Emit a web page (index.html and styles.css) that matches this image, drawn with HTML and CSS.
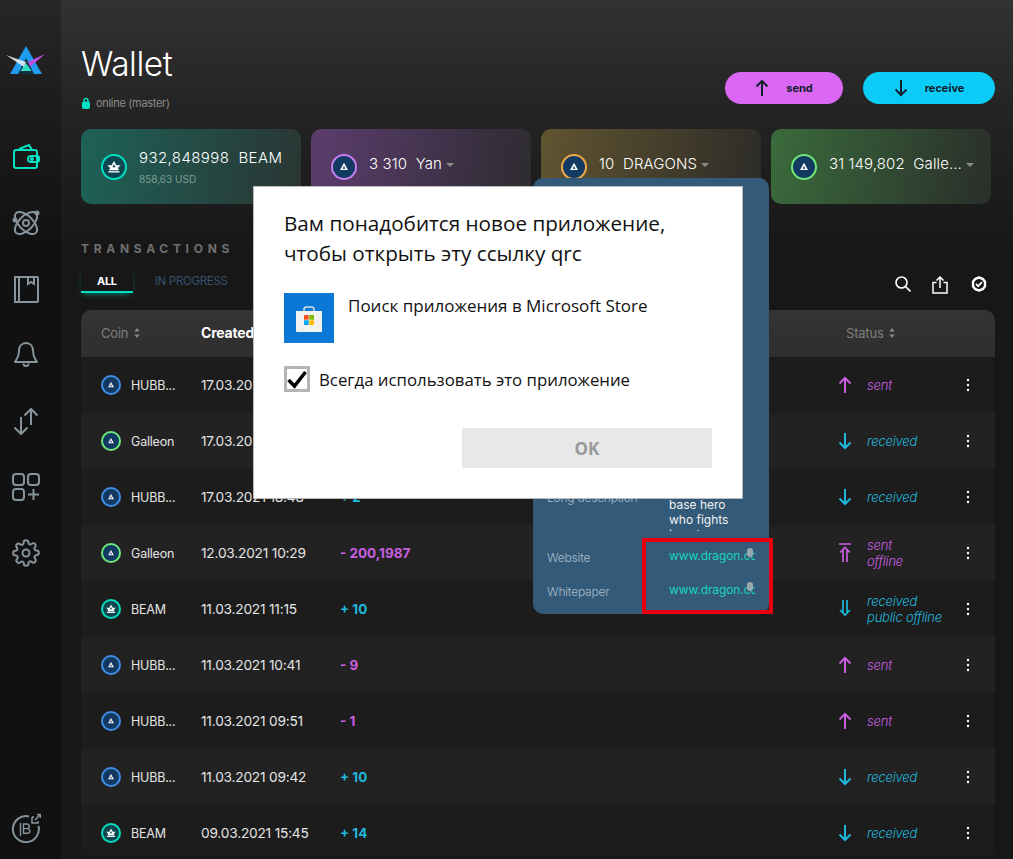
FILE: index.html
```html
<!DOCTYPE html>
<html lang="en">
<head>
    <meta charset="UTF-8">
    <meta name="viewport" content="width=device-width, initial-scale=1.0">
    <title>Wallet</title>
    <link rel="stylesheet" href="styles.css">
</head>
<body>
    <!-- Shared icons -->
    <svg class="sprite" xmlns="http://www.w3.org/2000/svg">
        <symbol id="asset" viewBox="0 0 20 20">
            <path d="M10 6.2l3.6 6.6H6.4z" fill="#fff"/>
            <path d="M10 9.2l1.3 2.4H8.7z" fill="#123a63"/>
        </symbol>
        <symbol id="beam" viewBox="0 0 20 20">
            <path d="M10 4.5l4.6 8.5H5.4z" fill="#fff"/>
            <path d="M4 8.5h12l-2.5 2.5h-7z" fill="#fff"/>
            <path d="M10 7.5l1.5 2.8H8.5z" fill="#0d4650"/>
            <path d="M5 13.8h10V15H5z" fill="#fff"/>
        </symbol>
        <symbol id="sort" viewBox="0 0 6 10">
            <path d="M3 0l2.6 3.6H.4zM3 10L.4 6.4h5.2z" fill="#8a8a8a"/>
        </symbol>
        <symbol id="up" viewBox="0 0 14 18">
            <path d="M7 17V2M1.5 7.5L7 2l5.5 5.5" fill="none" stroke="currentColor" stroke-width="2"/>
        </symbol>
        <symbol id="down" viewBox="0 0 14 18">
            <path d="M7 1v15M1.5 10.5L7 16l5.5-5.5" fill="none" stroke="currentColor" stroke-width="2"/>
        </symbol>
        <symbol id="up-offline" viewBox="0 0 14 20">
            <path d="M1 1h12M5 19V7M9 19V7M2 9.5l5-5 5 5" fill="none" stroke="currentColor" stroke-width="1.7"/>
        </symbol>
        <symbol id="down-offline" viewBox="0 0 14 20">
            <path d="M5 1v13M9 1v13M2 11l5 5 5-5" fill="none" stroke="currentColor" stroke-width="1.7"/>
        </symbol>
        <symbol id="dots" viewBox="0 0 4 14">
            <circle cx="2" cy="2" r="1.2" fill="#fff"/>
            <circle cx="2" cy="7" r="1.2" fill="#fff"/>
            <circle cx="2" cy="12" r="1.2" fill="#fff"/>
        </symbol>
    </svg>

    <div class="app">
        <!-- Left icon bar -->
        <nav class="sidebar">
            <svg class="logo" viewBox="0 0 44 34" width="44" height="34">
                <path d="M20 2l16 28H4z" fill="#1f9bf0"/>
                <path d="M20 14l8 16H12z" fill="#12303f"/>
                <path d="M20 19l5.5 8h-11z" fill="#2fe0c8"/>
                <path d="M0 11l20 7-2 5z" fill="#f2f2f2" opacity=".85"/>
                <path d="M39 10L22 18l2 5z" fill="#c04fe0"/>
            </svg>
            <a class="nav-item active">
                <svg viewBox="0 0 28 28" width="28" height="28" fill="none" stroke="currentColor" stroke-width="2">
                    <path d="M4 7h19a2 2 0 0 1 2 2v14a2 2 0 0 1-2 2H4a2 2 0 0 1-2-2V9a2 2 0 0 1 2-2z"/>
                    <path d="M7 6l10-4 3 5"/>
                    <path d="M19 13h6a2 2 0 0 1 2 2v2a2 2 0 0 1-2 2h-6a3 3 0 0 1 0-6z"/>
                    <circle cx="20" cy="16" r="1"/>
                </svg>
            </a>
            <a class="nav-item">
                <svg viewBox="0 0 28 28" width="28" height="28" fill="none" stroke="currentColor" stroke-width="2">
                    <ellipse cx="14" cy="14" rx="14" ry="7" transform="rotate(45 14 14)"/>
                    <ellipse cx="14" cy="14" rx="14" ry="7" transform="rotate(-45 14 14)"/>
                    <circle cx="14" cy="14" r="3"/>
                    <circle cx="25" cy="4" r="1.5" fill="currentColor"/>
                    <circle cx="3" cy="11" r="1.5" fill="currentColor"/>
                </svg>
            </a>
            <a class="nav-item">
                <svg viewBox="0 0 26 28" width="26" height="28" fill="none" stroke="currentColor" stroke-width="2">
                    <path d="M2 2h22a1 1 0 0 1 1 1v23a1 1 0 0 1-1 1H2z"/>
                    <path d="M6 2v25"/>
                    <path d="M15 2v7l3-2 3 2V2"/>
                </svg>
            </a>
            <a class="nav-item">
                <svg viewBox="0 0 24 28" width="24" height="28" fill="none" stroke="currentColor" stroke-width="2">
                    <path d="M12 2c-4.5 0-7 3.5-7 8 0 6-2 8-4 11h22c-2-3-4-5-4-11 0-4.5-2.5-8-7-8z" stroke-linejoin="round"/>
                    <path d="M9.5 22.5a2.5 2.5 0 0 0 5 0"/>
                </svg>
            </a>
            <a class="nav-item">
                <svg viewBox="0 0 26 28" width="26" height="28" fill="none" stroke="currentColor" stroke-width="2">
                    <path d="M8 10v17M1.5 20.5L8 27l6.5-6.5"/>
                    <path d="M18 18V2M11.5 8.5L18 2l6.5 6.5"/>
                </svg>
            </a>
            <a class="nav-item">
                <svg viewBox="0 0 28 28" width="28" height="28" fill="none" stroke="currentColor" stroke-width="2">
                    <rect x="1" y="1" width="11" height="11" rx="3"/>
                    <rect x="16" y="1" width="11" height="11" rx="3"/>
                    <rect x="1" y="16" width="11" height="11" rx="3"/>
                    <path d="M21.5 16v11M16 21.5h11"/>
                </svg>
            </a>
            <a class="nav-item">
                <svg viewBox="0 0 24 24" width="28" height="28" fill="none" stroke="currentColor" stroke-width="1.7">
                    <circle cx="12" cy="12" r="3"/>
                    <path d="M19.4 15a1.65 1.65 0 0 0 .33 1.82l.06.06a2 2 0 1 1-2.83 2.83l-.06-.06a1.65 1.65 0 0 0-2.8 1.17V21a2 2 0 1 1-4 0v-.09a1.65 1.65 0 0 0-2.8-1.12l-.06.06a2 2 0 1 1-2.83-2.83l.06-.06a1.65 1.65 0 0 0-1.17-2.8H3a2 2 0 1 1 0-4h.09a1.65 1.65 0 0 0 1.12-2.8l-.06-.06a2 2 0 1 1 2.83-2.83l.06.06a1.65 1.65 0 0 0 1.82.33H9a1.65 1.65 0 0 0 1-1.51V3a2 2 0 1 1 4 0v.09a1.65 1.65 0 0 0 2.8 1.12l.06-.06a2 2 0 1 1 2.83 2.83l-.06.06a1.65 1.65 0 0 0 1.17 2.8H21a2 2 0 1 1 0 4h-.09a1.65 1.65 0 0 0-1.51 1z"/>
                </svg>
            </a>
            <a class="nav-bottom">
                <svg viewBox="0 0 30 30" width="30" height="30" fill="none" stroke="currentColor" stroke-width="2">
                    <path d="M18 3.5a13 13 0 1 0 9.5 9.5"/>
                    <path d="M9.5 23V10M12.5 11H16a2.300 2.300 0 0 1 0 4.600h-3.500zM12.5 15.600h4a2.300 2.300 0 0 1 0 4.600h-4z" stroke-width="1.4"/>
                    <path d="M21 4h2M21 4v6h6V8M24 7l5-5M26 1.5h3.500V5" stroke-width="1.5"/>
                </svg>
            </a>
        </nav>

        <main class="content">
            <!-- Title and main buttons -->
            <header class="top">
                <div>
                    <h1>Wallet</h1>
                    <div class="net-status">
                        <svg viewBox="0 0 10 12" width="10" height="12">
                            <path d="M3 5V3.5a2 2 0 0 1 4 0V5" fill="none" stroke="#00e2c2" stroke-width="1.4"/>
                            <rect x="1" y="4.5" width="8" height="7.5" rx="2" fill="#00e2c2"/>
                        </svg>
                        online (master)
                    </div>
                </div>
                <div class="actions">
                    <button class="btn btn-send"><svg width="14" height="18"><use href="#up"/></svg>send</button>
                    <button class="btn btn-receive"><svg width="14" height="18"><use href="#down"/></svg>receive</button>
                </div>
            </header>

            <!-- Balance cards -->
            <section class="cards">
                <div class="card card-beam">
                    <span class="coin coin-large coin-beam"><svg><use href="#beam"/></svg></span>
                    <div>
                        <div class="card-amount">932,848998&nbsp; BEAM</div>
                        <div class="card-usd">858,63 USD</div>
                    </div>
                </div>
                <div class="card card-yan">
                    <span class="coin coin-large coin-yan"><svg><use href="#asset"/></svg></span>
                    <div class="card-amount">3 310&nbsp; Yan <i class="caret"></i></div>
                </div>
                <div class="card card-dragons">
                    <span class="coin coin-large coin-dragons"><svg><use href="#asset"/></svg></span>
                    <div class="card-amount">10&nbsp; DRAGONS <i class="caret"></i></div>
                </div>
                <div class="card card-galleon">
                    <span class="coin coin-large coin-galleon"><svg><use href="#asset"/></svg></span>
                    <div class="card-amount">31 149,802&nbsp; Galle... <i class="caret"></i></div>
                </div>
            </section>

            <h2>TRANSACTIONS</h2>

            <div class="toolbar">
                <div class="tabs">
                    <span class="tab tab-active">ALL</span>
                    <span class="tab">IN PROGRESS</span>
                </div>
                <div class="tools">
                    <svg viewBox="0 0 16 16" width="16" height="16" fill="none" stroke="#fff" stroke-width="1.6"><circle cx="6.5" cy="6.5" r="5.5"/><path d="M10.5 10.5l5 5"/></svg>
                    <svg viewBox="0 0 16 18" width="16" height="18" fill="none" stroke="#fff" stroke-width="1.5"><path d="M4.5 6.5H1V17h14V6.5h-3.5"/><path d="M8 12V1M4.5 4.5L8 1l3.5 3.5"/></svg>
                    <svg class="tool-last" viewBox="0 0 16 16" width="16" height="16" fill="none" stroke="#fff" stroke-width="2.4"><path d="M8 1.500l3.700 1.300 2.300 2.900v4.600l-2.300 2.900L8 14.500l-3.700-1.300L2 10.300V5.700l2.300-2.900z" stroke-linejoin="round"/><path d="M5 8l2.200 2.200L11 6" stroke-width="1.8"/></svg>
                </div>
            </div>

            <!-- Transactions table -->
            <section class="table">
                <div class="row head">
                    <div>Coin <svg class="sort" width="6" height="10"><use href="#sort"/></svg></div>
                    <div class="head-active">Created</div>
                    <div></div>
                    <div class="head-status">Status <svg class="sort" width="6" height="10"><use href="#sort"/></svg></div>
                    <div></div>
                </div>
                <div class="row">
                    <div class="coin-cell"><span class="coin coin-hubb"><svg><use href="#asset"/></svg></span>HUBB...</div>
                    <div class="date">17.03.2021 19:02</div>
                    <div class="amount out">- 4</div>
                    <div class="status out"><svg width="14" height="18"><use href="#up"/></svg><span>sent</span></div>
                    <svg class="more" width="4" height="14"><use href="#dots"/></svg>
                </div>
                <div class="row">
                    <div class="coin-cell"><span class="coin coin-galleon"><svg><use href="#asset"/></svg></span>Galleon</div>
                    <div class="date">17.03.2021 18:51</div>
                    <div class="amount in">+ 5</div>
                    <div class="status in"><svg width="14" height="18"><use href="#down"/></svg><span>received</span></div>
                    <svg class="more" width="4" height="14"><use href="#dots"/></svg>
                </div>
                <div class="row">
                    <div class="coin-cell"><span class="coin coin-hubb"><svg><use href="#asset"/></svg></span>HUBB...</div>
                    <div class="date">17.03.2021 18:48</div>
                    <div class="amount in">+ 2</div>
                    <div class="status in"><svg width="14" height="18"><use href="#down"/></svg><span>received</span></div>
                    <svg class="more" width="4" height="14"><use href="#dots"/></svg>
                </div>
                <div class="row">
                    <div class="coin-cell"><span class="coin coin-galleon"><svg><use href="#asset"/></svg></span>Galleon</div>
                    <div class="date">12.03.2021 10:29</div>
                    <div class="amount out">- 200,1987</div>
                    <div class="status out"><svg width="14" height="20"><use href="#up-offline"/></svg><span>sent<br>offline</span></div>
                    <svg class="more" width="4" height="14"><use href="#dots"/></svg>
                </div>
                <div class="row">
                    <div class="coin-cell"><span class="coin coin-beam"><svg><use href="#beam"/></svg></span>BEAM</div>
                    <div class="date">11.03.2021 11:15</div>
                    <div class="amount in">+ 10</div>
                    <div class="status in"><svg width="14" height="20"><use href="#down-offline"/></svg><span>received<br>public offline</span></div>
                    <svg class="more" width="4" height="14"><use href="#dots"/></svg>
                </div>
                <div class="row">
                    <div class="coin-cell"><span class="coin coin-hubb"><svg><use href="#asset"/></svg></span>HUBB...</div>
                    <div class="date">11.03.2021 10:41</div>
                    <div class="amount out">- 9</div>
                    <div class="status out"><svg width="14" height="18"><use href="#up"/></svg><span>sent</span></div>
                    <svg class="more" width="4" height="14"><use href="#dots"/></svg>
                </div>
                <div class="row">
                    <div class="coin-cell"><span class="coin coin-hubb"><svg><use href="#asset"/></svg></span>HUBB...</div>
                    <div class="date">11.03.2021 09:51</div>
                    <div class="amount out">- 1</div>
                    <div class="status out"><svg width="14" height="18"><use href="#up"/></svg><span>sent</span></div>
                    <svg class="more" width="4" height="14"><use href="#dots"/></svg>
                </div>
                <div class="row">
                    <div class="coin-cell"><span class="coin coin-hubb"><svg><use href="#asset"/></svg></span>HUBB...</div>
                    <div class="date">11.03.2021 09:42</div>
                    <div class="amount in">+ 10</div>
                    <div class="status in"><svg width="14" height="18"><use href="#down"/></svg><span>received</span></div>
                    <svg class="more" width="4" height="14"><use href="#dots"/></svg>
                </div>
                <div class="row">
                    <div class="coin-cell"><span class="coin coin-beam"><svg><use href="#beam"/></svg></span>BEAM</div>
                    <div class="date">09.03.2021 15:45</div>
                    <div class="amount in">+ 14</div>
                    <div class="status in"><svg width="14" height="18"><use href="#down"/></svg><span>received</span></div>
                    <svg class="more" width="4" height="14"><use href="#dots"/></svg>
                </div>
            </section>
        </main>
    </div>

    <!-- Asset info popup, mostly behind the system dialog -->
    <aside class="asset-panel">
        <div class="panel-row panel-desc">
            <div class="panel-label">Long description</div>
            <div class="panel-value">base hero<br>who fights<br>invaders</div>
        </div>
        <div class="panel-row">
            <div class="panel-label">Website</div>
            <div class="panel-link">www.dragon.com<i class="cursor-dot"></i></div>
        </div>
        <div class="panel-row">
            <div class="panel-label">Whitepaper</div>
            <div class="panel-link">www.dragon.com<i class="cursor-dot"></i></div>
        </div>
    </aside>

    <!-- Red annotation box -->
    <div class="highlight"></div>

    <!-- System dialog -->
    <div class="dialog">
        <div class="dialog-title">Вам понадобится новое приложение, чтобы открыть эту ссылку qrc</div>
        <div class="store-row">
            <div class="store-tile">
                <svg viewBox="0 0 28 28" width="28" height="28">
                    <path d="M9 8V5.5A2.500 2.500 0 0 1 11.5 3h5A2.500 2.500 0 0 1 19 5.5V8" fill="none" stroke="#d5dde3" stroke-width="1.6"/>
                    <path d="M1 7h26v20a1 1 0 0 1-1 1H2a1 1 0 0 1-1-1z" fill="#f1f1f1"/>
                    <rect x="9" y="11" width="4.7" height="4.7" fill="#f25022"/>
                    <rect x="14.3" y="11" width="4.7" height="4.7" fill="#7fba00"/>
                    <rect x="9" y="16.3" width="4.7" height="4.7" fill="#00a4ef"/>
                    <rect x="14.3" y="16.3" width="4.7" height="4.7" fill="#ffb900"/>
                </svg>
            </div>
            <span>Поиск приложения в Microsoft Store</span>
        </div>
        <div class="check-row">
            <span class="check-box">
                <svg viewBox="0 0 20 20" width="20" height="20"><path d="M1.5 11l6 6 11-14" fill="none" stroke="#000" stroke-width="3.5"/></svg>
            </span>
            <span>Всегда использовать это приложение</span>
        </div>
        <div class="dialog-footer">
            <button class="dialog-ok">OK</button>
        </div>
    </div>
</body>
</html>
```

FILE: styles.css
```css
/* Page base */
* {
    box-sizing: border-box;
}
html, body {
    height: 100%;
}
body {
    margin: 0;
    overflow: hidden;
    position: relative;
    font-family: Inter, "Liberation Sans", sans-serif;
    color: #fff;
    background: linear-gradient(180deg, #323232 0, #242424 110px, #171717 250px, #171717 100%);
}
.sprite {
    display: none;
}
.app {
    display: flex;
    height: 859px;
}

/* Left icon bar */
.sidebar {
    width: 61px;
    flex-shrink: 0;
    padding-right: 9px;
    display: flex;
    flex-direction: column;
    align-items: center;
    color: #87949c;
    background: rgba(0, 0, 0, 0.22);
}
.logo {
    margin: 44px 0 46px 4px;
    flex-shrink: 0;
}
.nav-item {
    height: 66px;
    flex-shrink: 0;
    display: flex;
    align-items: center;
    justify-content: center;
}
.nav-item.active {
    color: #00e2c2;
}
.nav-bottom {
    margin-top: auto;
    padding-bottom: 16px;
    line-height: 0;
}

/* Main column */
.content {
    flex: 1;
    padding: 0 18px 0 20px;
    min-width: 0;
}
.top {
    height: 129px;
    display: flex;
    justify-content: space-between;
}
h1 {
    margin: 42px 0 0;
    font-size: 33.5px;
    line-height: 44px;
    font-weight: 300;
    letter-spacing: -0.5px;
}
.net-status {
    margin-top: 10px;
    display: flex;
    align-items: center;
    gap: 5px;
    font-size: 11px;
    letter-spacing: -0.3px;
    color: #8b8b8b;
}
.actions {
    display: flex;
    gap: 20px;
    padding-top: 72px;
}
.btn {
    height: 32px;
    border: 0;
    border-radius: 16px;
    display: flex;
    align-items: center;
    justify-content: center;
    gap: 17px;
    font-family: inherit;
    font-size: 11px;
    font-weight: 700;
    color: #10202c;
}
.btn-send {
    width: 118px;
    background: #da68f5;
}
.btn-receive {
    width: 132px;
    background: #0bccf7;
}

/* Balance cards */
.cards {
    display: flex;
    gap: 10px;
}
.card {
    width: 220px;
    height: 75px;
    padding-left: 20px;
    border-radius: 10px;
    display: flex;
    align-items: center;
    gap: 12px;
}
.card-beam {
    background: linear-gradient(100deg, #1e6258 0, #2a3533 100%);
}
.card-yan {
    background: linear-gradient(100deg, #5c3d6e 0, #2d2b30 100%);
}
.card-dragons {
    background: linear-gradient(100deg, #615430 0, #2c2b28 100%);
}
.card-galleon {
    background: linear-gradient(100deg, #3a6b3c 0, #2a2e2a 100%);
}
.card-amount {
    font-size: 15px;
    font-weight: 300;
    letter-spacing: 0.1px;
    margin-top: -6px;
}
.card-usd {
    margin-top: 6px;
    font-size: 10px;
    color: #7d9c96;
}
.card-beam .card-amount {
    margin-top: 0;
    letter-spacing: 0.4px;
}
.caret {
    display: inline-block;
    vertical-align: middle;
    border-left: 4px solid transparent;
    border-right: 4px solid transparent;
    border-top: 4px solid #8c8c8c;
}

/* Coin badges */
.coin {
    width: 20px;
    height: 20px;
    border-radius: 50%;
    border: 2px solid;
    flex-shrink: 0;
    display: inline-flex;
    align-items: center;
    justify-content: center;
    background: #123a63;
}
.coin svg {
    width: 100%;
    height: 100%;
}
.coin-large {
    width: 26px;
    height: 26px;
    border-width: 2.5px;
}
.coin-beam {
    border-color: #00dfc0;
    background: #0d4650;
}
.coin-hubb {
    border-color: #3f8fe6;
}
.coin-galleon {
    border-color: #6ee87c;
}
.coin-yan {
    border-color: #c77ff0;
}
.coin-dragons {
    border-color: #f0a94a;
}

/* Transactions heading and tabs */
h2 {
    margin: 37px 0 0;
    font-size: 12px;
    line-height: 15px;
    font-weight: 700;
    letter-spacing: 4.7px;
    color: #6f6f6f;
}
.toolbar {
    margin-top: 11px;
    height: 43px;
    display: flex;
    justify-content: space-between;
}
.tabs {
    display: flex;
}
.tab {
    height: 26px;
    padding: 0 16px;
    margin-right: 6px;
    font-size: 11.5px;
    line-height: 28px;
    letter-spacing: -0.3px;
    color: #35516b;
}
.tab-active {
    font-size: 11px;
    color: #fff;
    font-weight: 700;
    border-bottom: 2px solid #00e2c2;
    box-shadow: 0 3px 6px -3px rgba(0, 226, 194, 0.7);
}
.tools {
    display: flex;
    gap: 21px;
    padding: 9px 8px 0 0;
    align-items: flex-start;
}
.tool-last {
    margin-left: 2px;
}

/* Transactions table */
.table {
    height: 545px;
    overflow: hidden;
    border-radius: 10px 10px 0 0;
}
.row {
    height: 56px;
    padding-left: 20px;
    display: grid;
    grid-template-columns: 100px 139px 498px 128px 28px;
    align-items: center;
    font-size: 12.5px;
    letter-spacing: -0.2px;
    color: #e4e4e4;
    background: #1c1c1c;
}
.row:nth-child(odd) {
    background: #222;
}
.row.head {
    height: 47px;
    padding-bottom: 2px;
    font-size: 13px;
    color: #7f7f7f;
    background: linear-gradient(180deg, #343434, #2e2e2e);
}
.head-active {
    font-size: 14px;
    font-weight: 700;
    color: #fff;
}
.head-status {
    padding-left: 8px;
}
.sort {
    margin-left: 2px;
}
.date {
    font-size: 13.7px;
}
.coin-cell {
    display: flex;
    align-items: center;
    gap: 10px;
}
.amount {
    font-size: 13.5px;
    font-weight: 700;
    letter-spacing: 0;
}
.amount.out, .status.out {
    color: #c95fe0;
}
.amount.in, .status.in {
    color: #1fb9dc;
}
.status {
    display: flex;
    align-items: center;
    gap: 15px;
    font-size: 13px;
    line-height: 16px;
    font-style: italic;
    font-weight: 300;
}
.status svg {
    flex-shrink: 0;
}
.more {
    justify-self: start;
}

/* Asset info popup */
.asset-panel {
    position: absolute;
    left: 533px;
    top: 178px;
    width: 236px;
    height: 436px;
    padding: 0 14px 6px;
    border-radius: 10px;
    overflow: hidden;
    background: #335a78;
    display: flex;
    flex-direction: column;
    justify-content: flex-end;
    font-size: 12px;
    font-weight: 300;
}
.panel-row {
    height: 34px;
    display: grid;
    grid-template-columns: 122px 86px;
    align-items: center;
}
.panel-desc {
    height: 34px;
    margin-bottom: 9px;
    align-items: start;
}
.panel-label {
    color: #a9bccb;
    letter-spacing: -0.2px;
}
.panel-desc .panel-label {
    margin-top: -7px;
}
.panel-value {
    height: 34px;
    overflow: hidden;
    line-height: 15px;
    color: #f2f2f2;
    font-weight: 400;
}
.panel-link {
    position: relative;
    overflow: hidden;
    white-space: nowrap;
    margin-top: -4px;
    letter-spacing: -0.1px;
    color: #19d6bd;
    font-weight: 400;
}
.cursor-dot {
    position: absolute;
    left: 78px;
    top: 0;
    width: 6px;
    height: 9px;
    border-radius: 3px;
    background: #9aa6ae;
}
.highlight {
    position: absolute;
    left: 642px;
    top: 538px;
    width: 131px;
    height: 76px;
    border: 4px solid #e8000f;
}

/* System dialog */
.dialog {
    position: absolute;
    left: 253px;
    top: 186px;
    width: 490px;
    height: 313px;
    padding: 21px 30px 0;
    background: #fff;
    border: 1px solid #b9b9b9;
    font-family: "Open Sans", "Noto Sans", sans-serif;
    color: #111;
}
.dialog-title {
    width: 410px;
    font-size: 20.7px;
    line-height: 30px;
}
.store-row {
    margin-top: 25px;
    display: flex;
    gap: 14px;
    font-size: 17px;
    line-height: 24px;
}
.store-row span {
    margin-top: 1px;
}
.store-tile {
    width: 50px;
    height: 50px;
    background: #0a78d4;
    display: flex;
    align-items: center;
    justify-content: center;
}
.check-row {
    margin-top: 23px;
    display: flex;
    align-items: center;
    gap: 9px;
    font-size: 16.8px;
}
.check-box {
    width: 26px;
    height: 26px;
    border: 3px solid #b5b5b5;
    line-height: 0;
}
.dialog-footer {
    margin-top: 36px;
    display: flex;
    justify-content: flex-end;
}
.dialog-ok {
    width: 250px;
    height: 40px;
    border: 0;
    background: #e8e8e8;
    color: #999;
    font-family: inherit;
    font-size: 17px;
    font-weight: 700;
}
```
